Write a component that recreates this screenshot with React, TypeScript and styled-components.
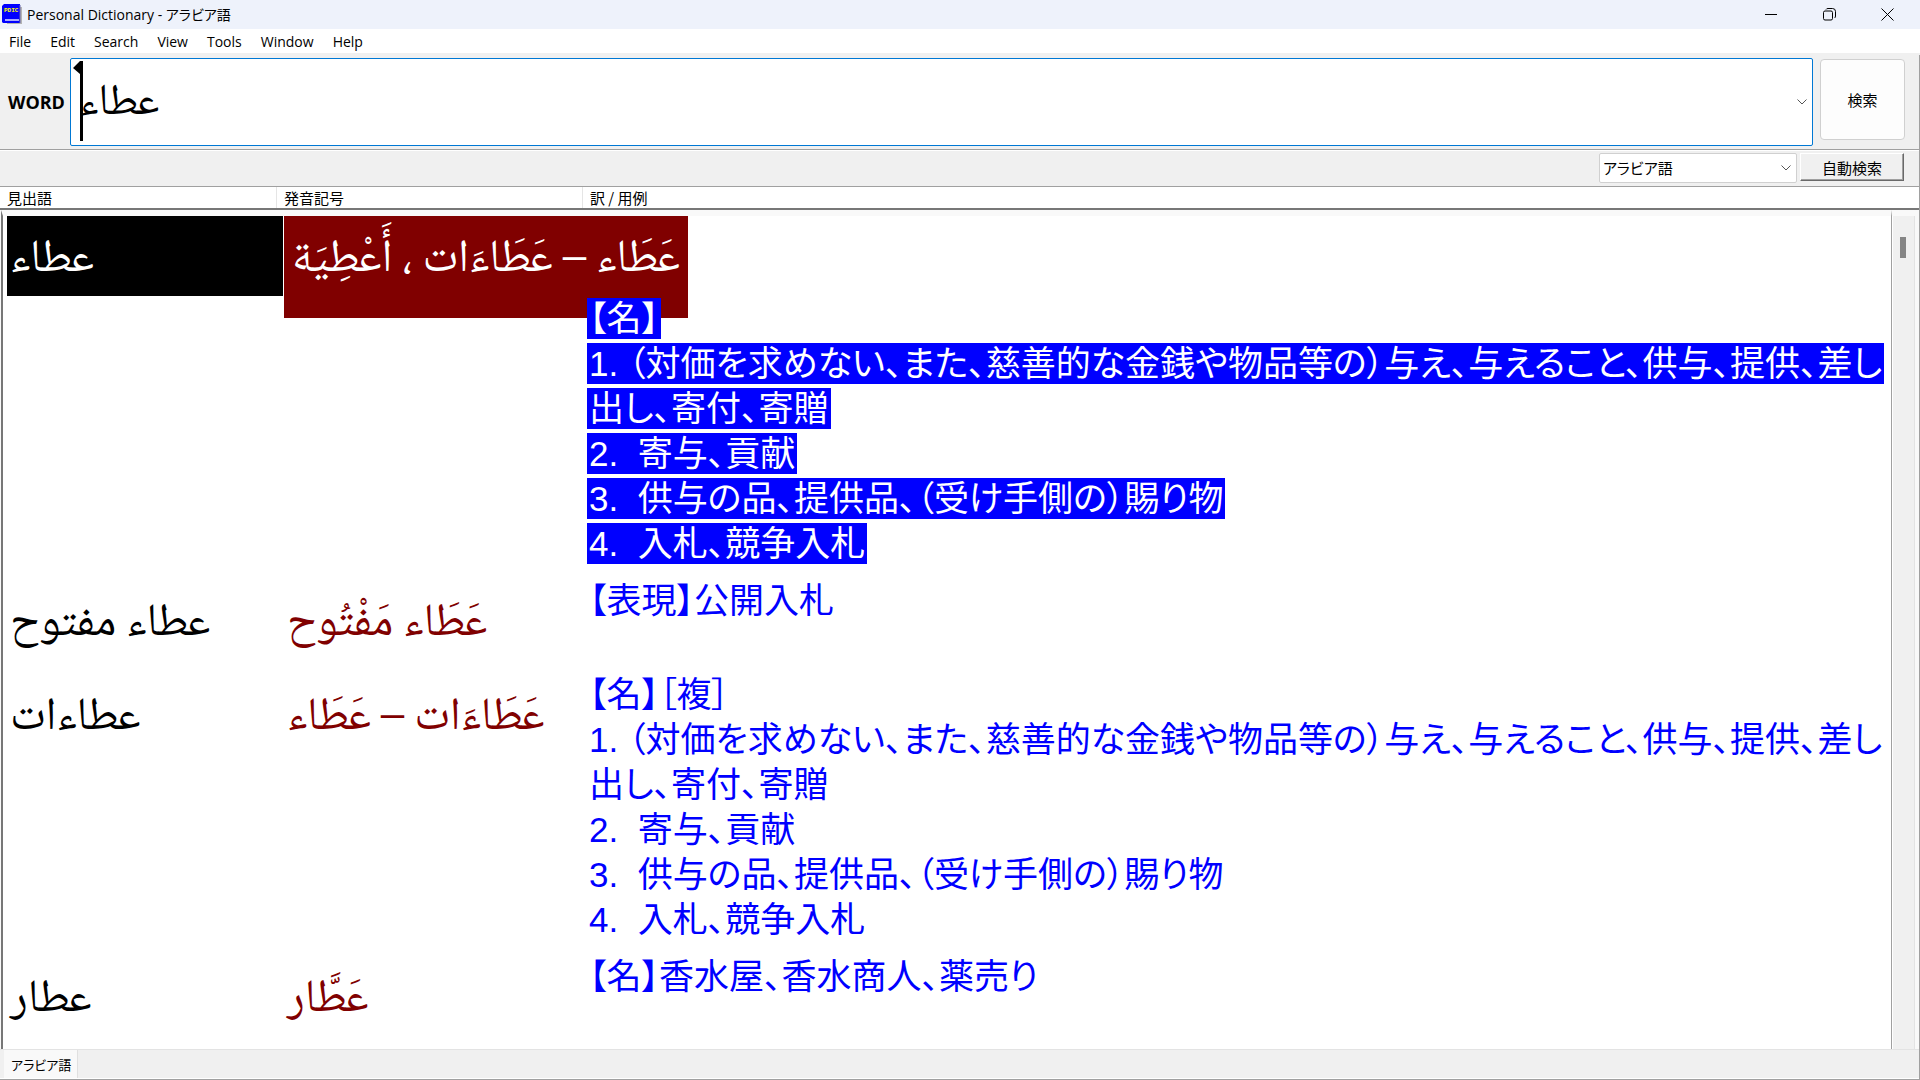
import React, { useState } from "react";
import styled, { createGlobalStyle } from "styled-components";

const uiFont = `"Open Sans", "Noto Sans CJK JP", sans-serif`;
const jaFont = `"Noto Sans CJK JP", sans-serif`;
const meaningFont = `"Liberation Sans", "Noto Sans CJK JP", sans-serif`;
const arFont = `"Noto Naskh Arabic", "Amiri", "Times New Roman", serif`;

const Global = createGlobalStyle`
  * { box-sizing: border-box; }
  html, body { margin: 0; }
  body {
    background: #f0f0f0;
    color: #000;
    font-family: ${uiFont};
    font-feature-settings: "palt";
    font-size: 14px;
  }
  button, input, select { font: inherit; color: inherit; font-feature-settings: inherit; }
`;

const Window = styled.div`
  display: flex;
  flex-direction: column;
  height: 100vh;
  overflow: hidden;
`;

const TitleBar = styled.header`
  display: flex;
  align-items: center;
  height: 29px;
  padding: 0 4px 0 2px;
  background: #eef2fb;
`;

const Title = styled.h1`
  flex: 1;
  margin: 0 0 0 5px;
  font-size: 14px;
  font-weight: 400;
  line-height: 20px;
`;

const CaptionButton = styled.button`
  display: grid;
  place-items: center;
  width: 58px;
  height: 29px;
  padding: 0;
  border: 0;
  background: none;
`;

const MenuBar = styled.nav`
  display: flex;
  gap: 19px;
  height: 26px;
  padding: 0 9px;
  background: #fff;
  border-bottom: 2px solid #f0f0f0;
`;

const MenuItem = styled.button`
  padding: 0;
  border: 0;
  background: none;
  font-size: 14px;
`;

const Frame = styled.main`
  display: flex;
  flex: 1;
  flex-direction: column;
  min-height: 0;
  border-right: 1px solid #a0a0a0;
  border-bottom: 1px solid #a0a0a0;
`;

const SearchBar = styled.form`
  display: flex;
  align-items: flex-start;
  height: 95px;
  padding: 3px 14px 0 8px;
  border-bottom: 1px solid #a0a0a0;
`;

const WordLabel = styled.label`
  width: 62px;
  font-size: 18px;
  font-weight: 700;
  line-height: 88px;
`;

const WordBox = styled.div`
  position: relative;
  display: flex;
  flex: 1;
  height: 88px;
  border: 1px solid #0078d4;
  border-radius: 2px;
  background: #fff;
`;

const WordInput = styled.input`
  flex: 1;
  min-width: 0;
  padding: 4px 8px 0;
  border: 0;
  outline: 0;
  background: none;
  font-family: ${arFont};
  font-size: 44px;
  text-align: left;
`;

const Caret = styled.svg`
  position: absolute;
  top: 2px;
  left: 2px;
`;

const DropButton = styled.button`
  display: grid;
  place-items: center;
  width: 20px;
  padding: 0;
  border: 0;
  background: none;
`;

const SearchButton = styled.button`
  width: 85px;
  height: 81px;
  margin: 1px 0 0 7px;
  border: 1px solid #d0d0d0;
  border-radius: 4px;
  background: #fdfdfd;
  font-size: 15px;
`;

const ToolBar = styled.div`
  display: flex;
  justify-content: flex-end;
  gap: 3px;
  height: 37px;
  padding: 2px 15px 0 0;
  border-top: 1px solid #fff;
  border-bottom: 1px solid #a0a0a0;
`;

const SelectBox = styled.div`
  display: grid;
  align-items: center;
  width: 198px;
  height: 30px;
  border: 1px solid #d0d0d0;
  border-radius: 2px;
  background: #fff;
  & > * { grid-area: 1 / 1; }
  & > svg { justify-self: end; margin-right: 4px; pointer-events: none; }
`;

const Select = styled.select`
  width: 100%;
  height: 28px;
  padding: 0 3px;
  appearance: none;
  border: 0;
  background: none;
  font-size: 15px;
`;

const AutoButton = styled.button`
  width: 104px;
  height: 28px;
  padding: 0;
  border: 1px solid;
  border-color: #fff #696969 #696969 #fff;
  background: #f0f0f0;
  box-shadow: inset -1px -1px 0 #a0a0a0;
  font-size: 15px;
`;

const Results = styled.div`
  display: grid;
  flex: 1;
  grid-template: auto 1fr / 1fr auto;
  min-height: 0;
  background: #f9f9f9;
`;

const Table = styled.table`
  display: contents;
`;

const Head = styled.thead`
  grid-column: 1 / -1;
  display: block;
  background: #fff;
  border-bottom: 2px solid #777;
  & > tr { display: grid; grid-template-columns: 277px 306px 1fr; }
`;

const HeadCell = styled.th`
  height: 21px;
  padding: 0 7px;
  border-right: 1px solid #e5e5e5;
  font-family: ${jaFont};
  font-size: 15px;
  font-weight: 400;
  line-height: 21px;
  text-align: left;
  &:last-child { border: 0; }
`;

const Body = styled.tbody`
  display: block;
  overflow: hidden;
  margin-left: 1px;
  padding: 0 3px 0 4px;
  background: #fff;
  border-left: 2px solid #777;
  border-top: 6px solid #f9f9f9;
  border-right: 1px solid #a0a0a0;
`;

const Row = styled.tr`
  display: grid;
  grid-template-columns: 277px 303px 1fr;
  min-height: 82px;
  margin-bottom: 12px;
`;

const Arabic = styled.td<{ $ink: string; $selected: boolean; $tall?: boolean }>`
  justify-self: ${(p) => (p.$tall ? "start" : "stretch")};
  min-width: ${(p) => (p.$tall ? "404px" : "0")};
  height: ${(p) => (p.$tall ? 102 : 80)}px;
  margin-right: 1px;
  padding: 0 3px;
  background: ${(p) => (p.$selected ? p.$ink : "none")};
  color: ${(p) => (p.$selected ? "#fff" : p.$ink)};
  font-family: ${arFont};
  font-size: 46px;
  line-height: 90px;
  text-align: ${(p) => (p.$tall ? "center" : "left")};
  white-space: nowrap;
`;

const Meaning = styled.td<{ $dropped: boolean }>`
  padding: ${(p) => (p.$dropped ? 82 : 0)}px 0 0;
  color: #00f;
  font-family: ${meaningFont};
  font-size: 35px;
  line-height: 45px;
`;

const Line = styled.div`
  height: 45px;
  white-space: pre;
`;

const Mark = styled.span<{ $selected: boolean }>`
  display: inline-block;
  height: 41px;
  padding: 0 2px;
  line-height: 41px;
  vertical-align: top;
  background: ${(p) => (p.$selected ? "#00f" : "none")};
  color: ${(p) => (p.$selected ? "#fff" : "#00f")};
`;

const ScrollTrack = styled.div`
  width: 23px;
  margin: 6px 4px 0 0;
  padding: 21px 0 0 7px;
  border-left: 1px solid #fff;
  border-right: 1px solid #e3e3e3;
  background: #f0f0f0;
`;

const ScrollThumb = styled.div`
  width: 6px;
  height: 21px;
  background: #858585;
`;

const Tabs = styled.footer`
  display: flex;
  height: 30px;
  padding-left: 4px;
  border-top: 1px solid #e3e3e3;
  border-bottom: 1px solid #fff;
`;

const Tab = styled.button`
  padding: 0 6px 0 7px;
  border: 0;
  border-right: 1px solid #e0e0e0;
  background: #f9f9f9;
  font-size: 13px;
`;

const Chevron = () => (
  <svg width="12" height="8" viewBox="0 0 12 8" fill="none" stroke="#555" aria-hidden="true">
    <path d="M1.5 1.5 6 6l4.5-4.5" />
  </svg>
);

const giving = [
  "1. （対価を求めない、また、慈善的な金銭や物品等の）与え、与えること、供与、提供、差し",
  "出し、寄付、寄贈",
  "2.  寄与、貢献",
  "3.  供与の品、提供品、（受け手側の）賜り物",
  "4.  入札、競争入札",
];

const entries = [
  { word: "عطاء", forms: "عَطَاء – عَطَاءَات ، أَعْطِيَة", meaning: ["【名】", ...giving], long: true },
  { word: "عطاء مفتوح", forms: "عَطَاء مَفْتُوح", meaning: ["【表現】公開入札"], long: false },
  { word: "عطاءات", forms: "عَطَاءَات – عَطَاء", meaning: ["【名】［複］", ...giving], long: false },
  { word: "عطار", forms: "عَطَّار", meaning: ["【名】香水屋、香水商人、薬売り"], long: false },
];

export default function App() {
  const [query, setQuery] = useState("عطاء");
  const [selected, setSelected] = useState(0);
  return (
    <>
      <Global />
      <Window>
        <TitleBar>
          <svg width="20" height="21" viewBox="0 0 20 21" aria-hidden="true">
            <path d="M4 3h16v17H5z" fill="#b4b4b4" />
            <path d="M0 2 2 0h16v19H1L0 18z" fill="#00f" />
            <path d="M3 16h14" stroke="#a8a8ff" strokeWidth="2" />
            <path d="M18 1v18" stroke="#66a" />
            <text x="2" y="8" fill="#ff0" fontSize="6" fontFamily="Liberation Mono" fontWeight="700">PDIC</text>
          </svg>
          <Title>Personal Dictionary - アラビア語</Title>
          <CaptionButton aria-label="Minimize">
            <svg width="12" height="12" stroke="#000"><path d="M0 5.500h12" /></svg>
          </CaptionButton>
          <CaptionButton aria-label="Restore">
            <svg width="13" height="13" fill="none" stroke="#000">
              <rect x=".5" y="3" width="9" height="9" rx="1.500" />
              <path d="M3 1.500Q3.500.5 5 .5h4.500q3 0 3 3V8q0 1.500-1 2" />
            </svg>
          </CaptionButton>
          <CaptionButton aria-label="Close">
            <svg width="13" height="13" stroke="#000"><path d="m.5.5 12 12m0-12-12 12" /></svg>
          </CaptionButton>
        </TitleBar>
        <MenuBar>
          {["File", "Edit", "Search", "View", "Tools", "Window", "Help"].map((m) => (
            <MenuItem key={m}>{m}</MenuItem>
          ))}
        </MenuBar>
        <Frame>
          <SearchBar onSubmit={(e) => e.preventDefault()}>
            <WordLabel htmlFor="word">WORD</WordLabel>
            <WordBox>
              <WordInput id="word" dir="rtl" value={query} onChange={(e) => setQuery(e.target.value)} />
              <Caret width="10" height="80" aria-hidden="true">
                <path d="M7 0h3v80H7V13L0 7z" />
              </Caret>
              <DropButton type="button" aria-label="History"><Chevron /></DropButton>
            </WordBox>
            <SearchButton>検索</SearchButton>
          </SearchBar>
          <ToolBar>
            <SelectBox>
              <Select aria-label="Dictionary"><option>アラビア語</option></Select>
              <Chevron />
            </SelectBox>
            <AutoButton type="button">自動検索</AutoButton>
          </ToolBar>
          <Results>
            <Table>
              <Head>
                <tr>
                  <HeadCell>見出語</HeadCell>
                  <HeadCell>発音記号</HeadCell>
                  <HeadCell>訳 / 用例</HeadCell>
                </tr>
              </Head>
              <Body>
                {entries.map((e, i) => {
                  const on = i === selected;
                  return (
                    <Row key={e.word} onClick={() => setSelected(i)}>
                      <Arabic $ink="#000" $selected={on} lang="ar">{e.word}</Arabic>
                      <Arabic $ink="#800000" $selected={on} $tall={e.long} lang="ar">{e.forms}</Arabic>
                      <Meaning $dropped={e.long}>
                        {e.meaning.map((m) => <Line key={m}><Mark $selected={on}>{m}</Mark></Line>)}
                      </Meaning>
                    </Row>
                  );
                })}
              </Body>
            </Table>
            <ScrollTrack><ScrollThumb /></ScrollTrack>
          </Results>
          <Tabs><Tab>アラビア語</Tab></Tabs>
        </Frame>
      </Window>
    </>
  );
}
